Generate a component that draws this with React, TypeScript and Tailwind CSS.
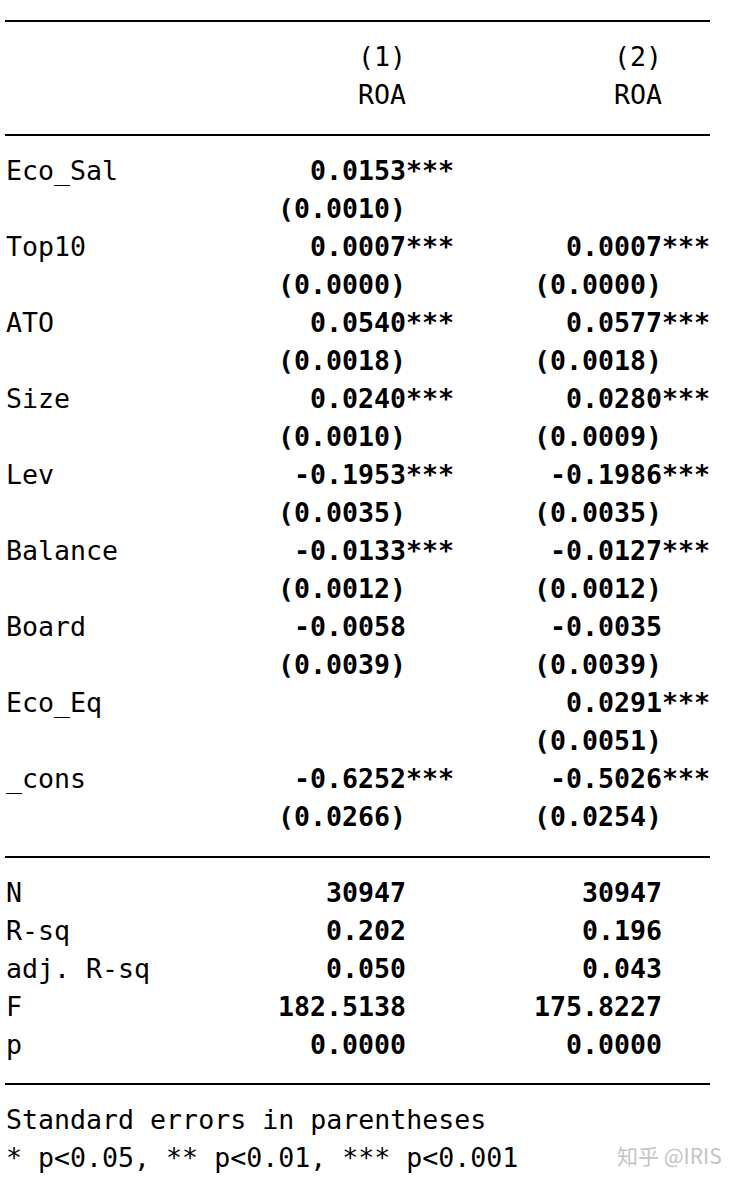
const MONO = "font-['DejaVu_Sans_Mono','Liberation_Mono',monospace]";

type Row = {
  label?: string;
  c1?: string;
  s1?: string;
  c2?: string;
  s2?: string;
};

const coefs: [string, string, string, string, string, string, string][] = [
  ["Eco_Sal", "0.0153", "***", "(0.0010)", "", "", ""],
  ["Top10", "0.0007", "***", "(0.0000)", "0.0007", "***", "(0.0000)"],
  ["ATO", "0.0540", "***", "(0.0018)", "0.0577", "***", "(0.0018)"],
  ["Size", "0.0240", "***", "(0.0010)", "0.0280", "***", "(0.0009)"],
  ["Lev", "-0.1953", "***", "(0.0035)", "-0.1986", "***", "(0.0035)"],
  ["Balance", "-0.0133", "***", "(0.0012)", "-0.0127", "***", "(0.0012)"],
  ["Board", "-0.0058", "", "(0.0039)", "-0.0035", "", "(0.0039)"],
  ["Eco_Eq", "", "", "", "0.0291", "***", "(0.0051)"],
  ["_cons", "-0.6252", "***", "(0.0266)", "-0.5026", "***", "(0.0254)"],
];

const coefRows: Row[] = coefs.flatMap(([label, b1, st1, se1, b2, st2, se2]) => [
  { label, c1: b1, s1: st1, c2: b2, s2: st2 },
  { c1: se1, c2: se2 },
]);

const stats: Row[] = [
  { label: "N", c1: "30947", c2: "30947" },
  { label: "R-sq", c1: "0.202", c2: "0.196" },
  { label: "adj. R-sq", c1: "0.050", c2: "0.043" },
  { label: "F", c1: "182.5138", c2: "175.8227" },
  { label: "p", c1: "0.0000", c2: "0.0000" },
];

function TableRow({ row, bold = true }: { row: Row; bold?: boolean }) {
  const w = bold ? "font-bold" : "font-normal";
  return (
    <div className="grid h-[38px] grid-cols-[272px_128px_48px_208px_48px] items-center whitespace-pre">
      <span>{row.label ?? ""}</span>
      <span className={`text-right ${w}`}>{row.c1 ?? ""}</span>
      <span className={w}>{row.s1 ?? ""}</span>
      <span className={`text-right ${w}`}>{row.c2 ?? ""}</span>
      <span className={w}>{row.s2 ?? ""}</span>
    </div>
  );
}

function Rule() {
  return <div className="h-[2px] w-[705px] bg-black" />;
}

export default function App() {
  return (
    <div className="relative h-[1186px] w-[750px] overflow-hidden bg-white text-black">
      <div className={`${MONO} pl-[6px] pt-[20px] text-[26.6px] leading-[38px]`}>
        <div className="-ml-[1px]">
          <Rule />
        </div>
        <div className="pt-[16px] pb-[20px]">
          <TableRow row={{ c1: "(1)", c2: "(2)" }} bold={false} />
          <TableRow row={{ c1: "ROA", c2: "ROA" }} bold={false} />
        </div>
        <div className="-ml-[1px]">
          <Rule />
        </div>
        <div className="pt-[16px] pb-[20px]">
          {coefRows.map((r, i) => (
            <TableRow key={i} row={r} />
          ))}
        </div>
        <div className="-ml-[1px]">
          <Rule />
        </div>
        <div className="pt-[16px] pb-[19px]">
          {stats.map((r, i) => (
            <TableRow key={i} row={r} />
          ))}
        </div>
        <div className="-ml-[1px]">
          <Rule />
        </div>
        <div className="pt-[16px] whitespace-pre">
          <div className="h-[38px]">Standard errors in parentheses</div>
          <div className="h-[38px]">* p&lt;0.05, ** p&lt;0.01, *** p&lt;0.001</div>
        </div>
      </div>
      <div className="absolute left-[617px] top-[1142px] font-['Noto_Sans_CJK_SC','Noto_Sans',sans-serif] text-[21px] leading-[26px] text-[#c4c4c4]">
        知乎 @IRIS
      </div>
    </div>
  );
}
